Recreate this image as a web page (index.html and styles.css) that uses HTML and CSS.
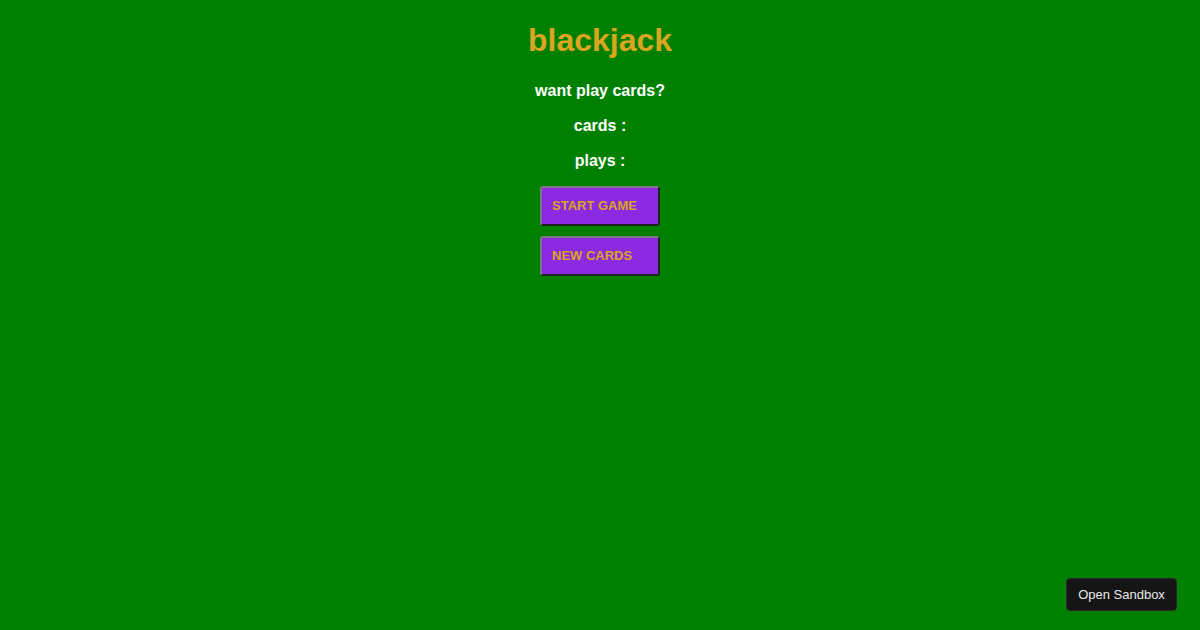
FILE: index.html
```html
<!DOCTYPE html>
<html>
<head>
<meta charset="utf-8">
<link rel="stylesheet" href="styles.css">
</head>
<body>
<main class="app">
  <h1 class="title">blackjack</h1>
  <p class="line line-first">want play cards?</p>
  <p class="line">cards :</p>
  <p class="line">plays :</p>
  <div class="actions">
    <button class="btn">START GAME</button>
    <button class="btn">NEW CARDS</button>
  </div>
</main>
<button class="sandbox">Open Sandbox</button>
</body>
</html>
```
FILE: styles.css
```css
html, body {
  margin: 0;
  padding: 0;
  height: 100%;
}
body {
  background: #008000;
  font-family: "Liberation Sans", Arial, sans-serif;
  overflow: hidden;
}
.app {
  display: flex;
  flex-direction: column;
  align-items: center;
  padding-top: 22px;
}
.title {
  margin: 0;
  font-size: 32px;
  line-height: 36px;
  font-weight: bold;
  color: #daa520;
}
.line {
  margin: 16px 0 0;
  font-size: 16px;
  line-height: 19px;
  font-weight: bold;
  color: #ffffff;
}
.line-first {
  margin-top: 23px;
}
.actions {
  margin-top: 16px;
  display: flex;
  flex-direction: column;
  gap: 10px;
}
.btn {
  box-sizing: border-box;
  width: 120px;
  height: 40px;
  padding: 0 10px 2px;
  text-align: left;
  background: #8a2be2;
  color: #daa520;
  font-family: "Liberation Sans", Arial, sans-serif;
  font-size: 13px;
  font-weight: bold;
  border-width: 2px;
  border-style: solid;
  border-color: #7a7a7a #222222 #222222 #7a7a7a;
  border-radius: 3px;
}
.sandbox {
  position: fixed;
  right: 23px;
  bottom: 19px;
  box-sizing: border-box;
  width: 111px;
  height: 33px;
  padding: 0;
  background: #151515;
  color: #e8e8e8;
  border: 1px solid #2a2a2a;
  border-radius: 4px;
  font-family: "Liberation Sans", Arial, sans-serif;
  font-size: 13px;
}
```
